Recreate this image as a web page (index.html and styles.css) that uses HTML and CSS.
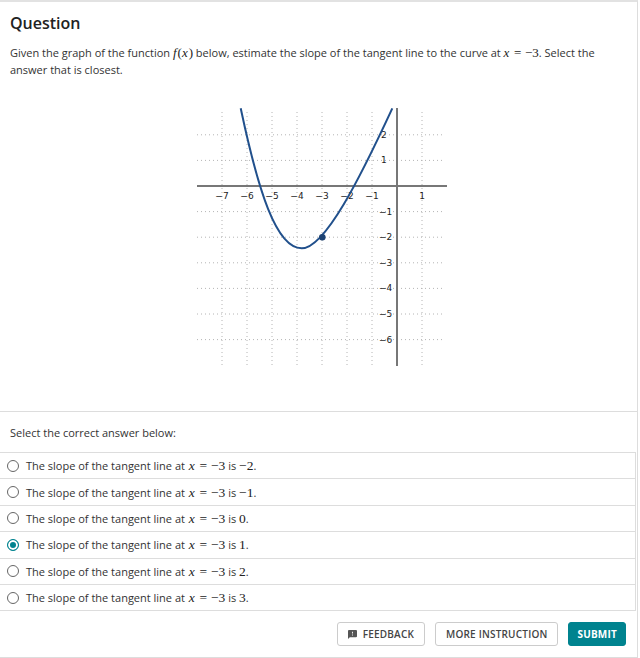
FILE: index.html
```html
<!DOCTYPE html>
<html lang="en">
<head>
<meta charset="UTF-8">
<meta name="viewport" content="width=device-width, initial-scale=1.0">
<title>Question</title>
<link rel="stylesheet" href="styles.css">
</head>
<body>

<div class="frame">
    <section class="question">
        <h2 class="title">Question</h2>
        <p class="prompt">Given the graph of the function <span class="math"><i>f</i>(<i>x</i>)</span> below, estimate the slope of the tangent line to the curve at <span class="math"><i>x</i><span class="rel">=</span>−3</span>. Select the answer that is closest.</p>
        <div class="graph">
            <svg class="plot" width="261" height="266" viewBox="188 104 261 266">
                <!-- dotted grid -->
                <path class="grid" d="M197 134.8H445M197 160.4H445M197 211.6H445M197 237.2H445M197 262.8H445M197 288.4H445M197 314H445M197 339.6H445
                                      M222 112V365M247 112V365M272 112V365M297 112V365M322 112V365M347 112V365M372 112V365M422 112V365"/>
                <path class="axis" d="M197 186H447M397 108V366"/>
                <g class="xlabels">
                    <text x="222" y="198.5">−7</text>
                    <text x="247" y="198.5">−6</text>
                    <text x="272" y="198.5">−5</text>
                    <text x="297" y="198.5">−4</text>
                    <text x="322" y="198.5">−3</text>
                    <text x="347" y="198.5">−2</text>
                    <text x="372" y="198.5">−1</text>
                    <text x="422" y="198.5">1</text>
                </g>
                <g class="ylabels">
                    <text x="381" y="134.8">2</text>
                    <text x="381" y="160.4">1</text>
                    <text x="379" y="211.6">−1</text>
                    <text x="379" y="237.2">−2</text>
                    <text x="379" y="262.8">−3</text>
                    <text x="379" y="288.4">−4</text>
                    <text x="379" y="314">−5</text>
                    <text x="379" y="339.6">−6</text>
                </g>
                <path class="curve" d="M240.7 108.3C258 190 276 248.3 301.7 248.3C325 248.3 360 178 392.3 108.3"/>
                <circle class="dot" cx="322.3" cy="237.2" r="3.3"/>
            </svg>
        </div>
    </section>

    <section class="answers">
        <p class="lead">Select the correct answer below:</p>
        <ul class="choices">
            <li class="choice"><span class="radio"></span><span>The slope of the tangent line at <span class="math"><i>x</i><span class="rel">=</span>−3</span> is <span class="math">−2</span>.</span></li>
            <li class="choice"><span class="radio"></span><span>The slope of the tangent line at <span class="math"><i>x</i><span class="rel">=</span>−3</span> is <span class="math">−1</span>.</span></li>
            <li class="choice"><span class="radio"></span><span>The slope of the tangent line at <span class="math"><i>x</i><span class="rel">=</span>−3</span> is <span class="math">0</span>.</span></li>
            <li class="choice selected"><span class="radio"></span><span>The slope of the tangent line at <span class="math"><i>x</i><span class="rel">=</span>−3</span> is <span class="math">1</span>.</span></li>
            <li class="choice"><span class="radio"></span><span>The slope of the tangent line at <span class="math"><i>x</i><span class="rel">=</span>−3</span> is <span class="math">2</span>.</span></li>
            <li class="choice"><span class="radio"></span><span>The slope of the tangent line at <span class="math"><i>x</i><span class="rel">=</span>−3</span> is <span class="math">3</span>.</span></li>
        </ul>
    </section>

    <div class="actions">
        <button class="btn">
            <svg class="btn-icon" width="9" height="9" viewBox="2 2 20 20"><path d="M20 2H4c-1.1 0-2 .9-2 2v18l4-4h14c1.1 0 2-.9 2-2V4c0-1.1-.9-2-2-2zm-7 12h-2v-2h2v2zm0-4h-2V6h2v4z"/></svg>
            Feedback
        </button>
        <button class="btn">More instruction</button>
        <button class="btn btn-submit">Submit</button>
    </div>
</div>

</body>
</html>
```

FILE: styles.css
```css
body {
    margin: 0;
    font-family: "Open Sans", "Liberation Sans", sans-serif;
    color: #333;
    background-color: #fff;
}

.frame {
    width: 637px;
    border-top: 2px solid #e2e2e2;
    border-right: 1px solid #ddd;
    border-bottom: 1px solid #ddd;
}

.question {
    box-sizing: border-box;
    height: 410px;
    padding: 10px 10px 0 10px;
    border-bottom: 1px solid #ddd;
}

.title {
    margin: 0;
    font-size: 16px;
    line-height: 22px;
    font-weight: 600;
    color: #222;
}

.prompt {
    margin: 10px 0 0 0;
    font-size: 11px;
    line-height: 17px;
}

.math {
    font-family: "Liberation Serif", "DejaVu Serif", serif;
    font-size: 13px;
    line-height: 1;
    color: #222;
}

.math i {
    font-style: italic;
    padding-right: 1px;
}

.rel {
    margin: 0 0.28em;
}

.choice .math {
    font-size: 13.5px;
}

.choice .math i {
    padding: 0 1px;
}

.graph {
    display: flex;
    justify-content: center;
    margin-top: 26px;
}

.plot {
    display: block;
}

.grid {
    fill: none;
    stroke: #b4b4b4;
    stroke-width: 1;
    stroke-dasharray: 1 3;
}

.axis {
    fill: none;
    stroke: #777;
    stroke-width: 2;
}

.xlabels text,
.ylabels text {
    font-family: "DejaVu Sans", sans-serif;
    font-size: 9px;
    fill: #222;
}

.xlabels text {
    text-anchor: middle;
}

.ylabels text {
    dominant-baseline: central;
}

.curve {
    fill: none;
    stroke: #21508c;
    stroke-width: 2;
}

.dot {
    fill: #1c4273;
}

.lead {
    margin: 0;
    padding: 12px 10px 11px 10px;
    font-size: 11px;
    line-height: 17px;
}

.choices {
    list-style: none;
    margin: 0 1px 0 0;
    padding: 0;
    border-top: 1px solid #ddd;
    border-right: 1px solid #ddd;
}

.choice {
    display: flex;
    align-items: center;
    gap: 7px;
    height: 25.4px;
    padding-left: 7px;
    border-bottom: 1px solid #ddd;
    font-size: 11px;
    white-space: nowrap;
}

.radio {
    width: 10px;
    height: 10px;
    flex: none;
    border: 1.5px solid #666;
    border-radius: 50%;
}

.choice.selected .radio {
    border-color: #00838f;
    background-color: #00838f;
    box-shadow: inset 0 0 0 2px #fff;
}

.actions {
    display: flex;
    justify-content: flex-end;
    gap: 10px;
    padding: 11px 11px 11px 0;
}

.btn {
    display: inline-flex;
    align-items: center;
    gap: 6px;
    height: 24px;
    padding: 0 10px;
    border: 1px solid #ccc;
    border-radius: 3px;
    background-color: #fff;
    color: #444;
    font-family: "Open Sans", sans-serif;
    font-size: 10px;
    font-weight: 600;
    letter-spacing: 0.2px;
    text-transform: uppercase;
    cursor: pointer;
}

.btn-icon {
    fill: #555;
}

.btn-submit {
    padding: 0 8px;
    background-color: #00838f;
    border-color: #00838f;
    color: #fff;
    font-weight: 700;
}
```
